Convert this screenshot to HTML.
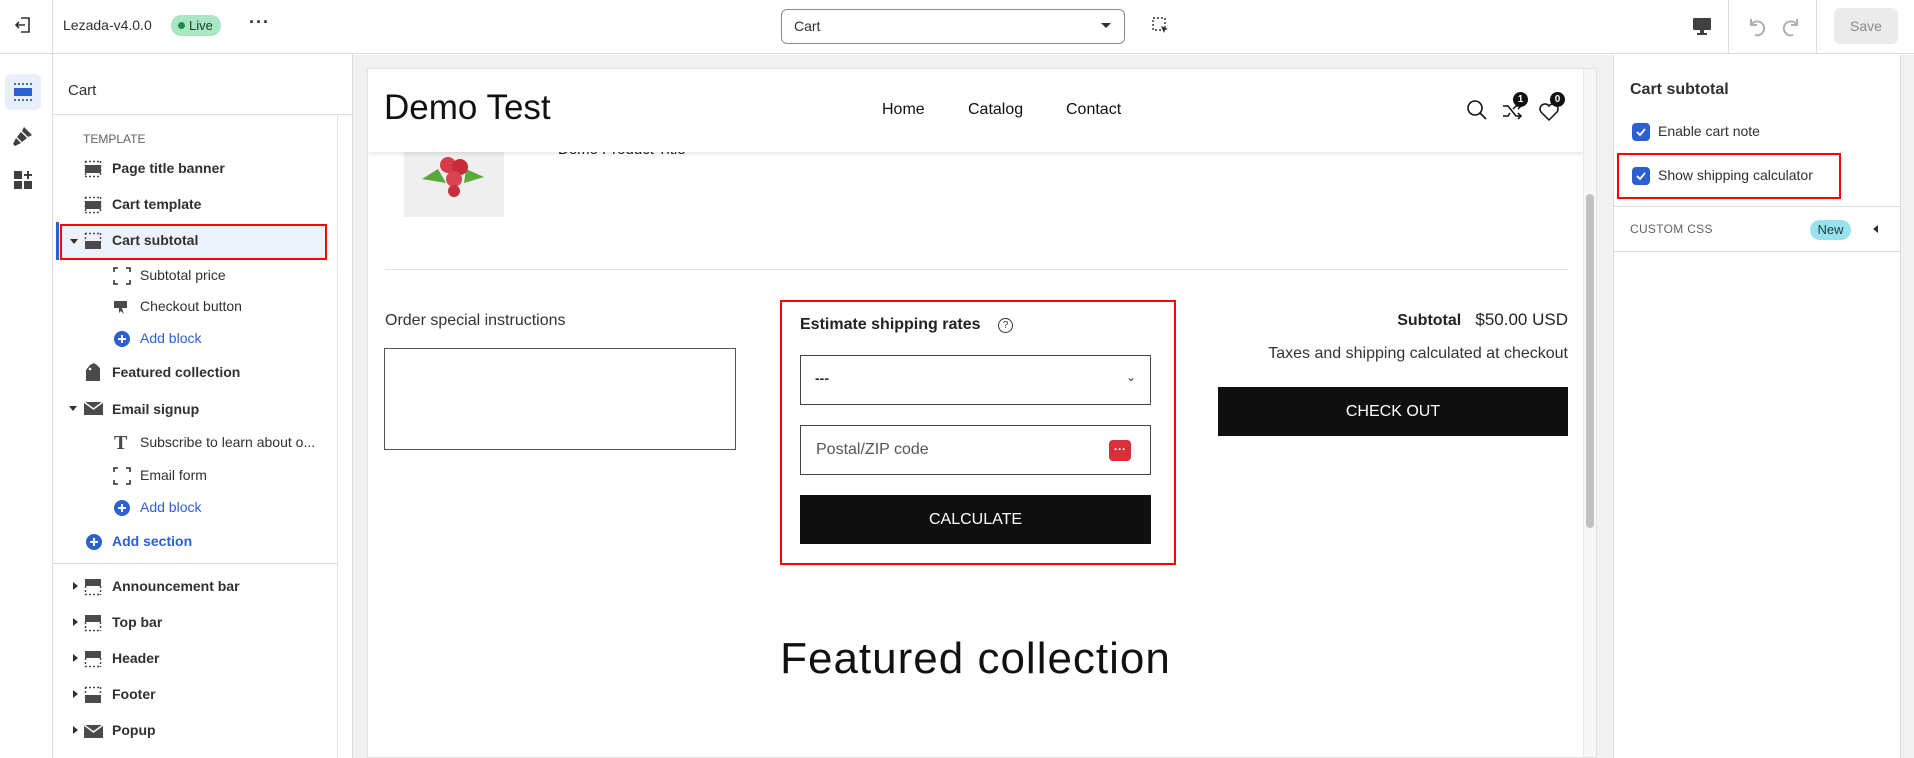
<!DOCTYPE html>
<html><head><meta charset="utf-8">
<style>
*{box-sizing:border-box;margin:0;padding:0}
body{width:1914px;height:758px;overflow:hidden;background:#fff;font-family:"Liberation Sans",sans-serif;color:#303030;position:relative}
.a{position:absolute}
.si{position:absolute;font-size:14px;font-weight:bold;color:#303030;white-space:nowrap}
.bi{position:absolute;font-size:14px;color:#303030;white-space:nowrap}
.blue{color:#2c5fd0}
.ic{position:absolute}
</style></head><body>
<div class="a" style="left:0;top:0;width:1914px;height:54px;border-bottom:1px solid #dcdcdc;background:#fff"></div>
<div class="a" style="left:52px;top:0;width:1px;height:54px;background:#dcdcdc"></div>
<svg class="ic" style="left:14px;top:16px" width="18" height="18" viewBox="0 0 18 18"><path d="M7 2H15V16H7M2 9H11M5 6L2 9L5 12" fill="none" stroke="#303030" stroke-width="1.6"/></svg>
<div class="a" style="left:63px;top:17px;font-size:14px;color:#303030">Lezada-v4.0.0</div>
<div class="a" style="left:171px;top:15px;width:50px;height:21px;border-radius:10px;background:#a8e6c4;font-size:13px;line-height:21px;padding-left:18px;color:#1a3a2a">Live</div>
<div class="a" style="left:178px;top:22px;width:7px;height:7px;border-radius:50%;background:#1f8a4f"></div>
<div class="a" style="left:249px;top:17px;font-size:18px;font-weight:bold;letter-spacing:1px;line-height:10px">···</div>
<div class="a" style="left:781px;top:9px;width:344px;height:35px;border:1px solid #8a8a8a;border-radius:6px;font-size:14px;line-height:33px;padding-left:12px">Cart</div>
<div class="a" style="left:1101px;top:23px;border-left:5px solid transparent;border-right:5px solid transparent;border-top:5px solid #303030"></div>
<svg class="ic" style="left:1151px;top:16px" width="20" height="20" viewBox="0 0 20 20"><rect x="2" y="2" width="12" height="12" fill="none" stroke="#303030" stroke-dasharray="2 2" stroke-width="1.4"/><path d="M10 10L17 13L14 14L13 17Z" fill="#303030"/></svg>
<svg class="ic" style="left:1692px;top:16px" width="20" height="20" viewBox="0 0 20 20"><rect x="1" y="2" width="18" height="12" rx="1" fill="#404040"/><rect x="8" y="14" width="4" height="3" fill="#404040"/><rect x="5" y="17" width="10" height="2" fill="#404040"/></svg>
<div class="a" style="left:1728px;top:0;width:1px;height:54px;background:#dcdcdc"></div>
<svg class="ic" style="left:1744px;top:14px" width="24" height="24" viewBox="0 0 24 24"><path d="M7 5V11H13M7 11A7 7 0 1 1 11 21" fill="none" stroke="#b0b0b0" stroke-width="2"/></svg>
<svg class="ic" style="left:1780px;top:14px" width="24" height="24" viewBox="0 0 24 24"><path d="M17 5V11H11M17 11A7 7 0 1 0 13 21" fill="none" stroke="#b0b0b0" stroke-width="2"/></svg>
<div class="a" style="left:1816px;top:0;width:1px;height:54px;background:#dcdcdc"></div>
<div class="a" style="left:1834px;top:8px;width:64px;height:36px;border-radius:6px;background:#ebebeb;color:#8a8a8a;font-size:14px;line-height:36px;text-align:center">Save</div>

<div class="a" style="left:52px;top:54px;width:1px;height:704px;background:#dcdcdc"></div>
<div class="a" style="left:5px;top:74px;width:36px;height:36px;border-radius:6px;background:#e9eefb"></div>
<svg class="ic" style="left:13px;top:82px" width="20" height="20" viewBox="0 0 20 20"><rect x="1" y="6" width="18" height="8" fill="#2c5fd0"/><path d="M1 2H19M1 18H19" stroke="#2c5fd0" stroke-width="1.8" stroke-dasharray="2 2"/></svg>
<svg class="ic" style="left:12px;top:125px" width="22" height="22" viewBox="0 0 22 22"><path d="M12 2L20 10L16 12L10 6Z M9 7L15 13L10 17L5 12Z M4 13L9 18L3 21L1 19Z" fill="#404040"/></svg>
<svg class="ic" style="left:13px;top:170px" width="20" height="20" viewBox="0 0 20 20"><rect x="1" y="1" width="8" height="8" fill="#404040"/><rect x="1" y="11" width="8" height="8" fill="#404040"/><rect x="11" y="11" width="8" height="8" fill="#404040"/><path d="M15 1V9M11 5H19" stroke="#404040" stroke-width="2"/></svg>

<div class="a" style="left:68px;top:82px;font-size:15px;color:#303030">Cart</div>
<div class="a" style="left:53px;top:114px;width:299px;height:1px;background:#dcdcdc"></div>
<div class="a" style="left:337px;top:115px;width:1px;height:643px;background:#e3e3e3"></div>
<div class="a" style="left:352px;top:54px;width:1px;height:704px;background:#dcdcdc"></div>
<div class="a" style="left:83px;top:132px;font-size:12px;color:#616161">TEMPLATE</div>

<svg width="0" height="0" style="position:absolute">
<defs>
<g id="sb"><rect x="1" y="5" width="16" height="8" fill="#4a4a4a"/><path d="M1 1.5H17M1 16.5H17M1.5 1V17M16.5 1V17" stroke="#4a4a4a" stroke-width="1.5" stroke-dasharray="2 2"/></g>
<g id="sbot"><rect x="1" y="9" width="16" height="8" fill="#4a4a4a"/><path d="M1 1.5H17M1.5 1V9M16.5 1V9" stroke="#4a4a4a" stroke-width="1.5" stroke-dasharray="2 2"/></g>
<g id="stop"><rect x="1" y="1" width="16" height="7" fill="#4a4a4a"/><path d="M1 16.5H17M1.5 8V17M16.5 8V17" stroke="#4a4a4a" stroke-width="1.5" stroke-dasharray="2 2"/></g>
<g id="env"><rect x="0" y="3" width="19" height="13" fill="#4a4a4a"/><path d="M0 3L9.5 10L19 3" fill="none" stroke="#fff" stroke-width="1.5"/></g>
<g id="brk"><path d="M1 5V1H5M13 1H17V5M17 13V17H13M5 17H1V13" fill="none" stroke="#4a4a4a" stroke-width="1.8"/></g>
<g id="plus"><circle cx="8" cy="8" r="8" fill="#2c5fd0"/><path d="M8 4V12M4 8H12" stroke="#fff" stroke-width="2"/></g>
</defs></svg>

<svg class="ic" style="left:84px;top:160px" width="18" height="18"><use href="#sb"/></svg>
<div class="si" style="left:112px;top:160px">Page title banner</div>
<svg class="ic" style="left:84px;top:196px" width="18" height="18"><use href="#sb"/></svg>
<div class="si" style="left:112px;top:196px">Cart template</div>

<div class="a" style="left:57px;top:224px;width:269px;height:36px;background:#edf1fc"></div>
<div class="a" style="left:56px;top:222px;width:3px;height:38px;background:#2c5fd0"></div>
<div class="a" style="left:60px;top:224px;width:267px;height:36px;border:2px solid #f00"></div>
<div class="a" style="left:70px;top:239px;border-left:4px solid transparent;border-right:4px solid transparent;border-top:5px solid #303030"></div>
<svg class="ic" style="left:84px;top:232px" width="18" height="18"><use href="#sbot"/></svg>
<div class="si" style="left:112px;top:232px">Cart subtotal</div>

<svg class="ic" style="left:113px;top:267px" width="18" height="18"><use href="#brk"/></svg>
<div class="bi" style="left:140px;top:267px">Subtotal price</div>
<svg class="ic" style="left:113px;top:298px" width="18" height="18" viewBox="0 0 18 18"><path d="M1 3H14V10H9L11 16L8 13L6 15V10H1Z" fill="#4a4a4a"/></svg>
<div class="bi" style="left:140px;top:298px">Checkout button</div>
<svg class="ic" style="left:114px;top:331px" width="16" height="16"><use href="#plus"/></svg>
<div class="bi blue" style="left:140px;top:330px">Add block</div>

<svg class="ic" style="left:84px;top:362px" width="20" height="20" viewBox="0 0 20 20"><path d="M6 3L10 1L14 4V19H2V8Z" fill="#4a4a4a"/><path d="M11 2L16 6V19H12" fill="#4a4a4a"/><circle cx="6" cy="7" r="1.3" fill="#fff"/></svg>
<div class="si" style="left:112px;top:364px">Featured collection</div>

<div class="a" style="left:69px;top:406px;border-left:4px solid transparent;border-right:4px solid transparent;border-top:5px solid #303030"></div>
<svg class="ic" style="left:84px;top:399px" width="20" height="18"><use href="#env"/></svg>
<div class="si" style="left:112px;top:401px">Email signup</div>
<div class="a" style="left:114px;top:432px;font-family:'Liberation Serif',serif;font-weight:bold;font-size:20px;color:#4a4a4a">T</div>
<div class="bi" style="left:140px;top:434px">Subscribe to learn about o...</div>
<svg class="ic" style="left:113px;top:467px" width="18" height="18"><use href="#brk"/></svg>
<div class="bi" style="left:140px;top:467px">Email form</div>
<svg class="ic" style="left:114px;top:500px" width="16" height="16"><use href="#plus"/></svg>
<div class="bi blue" style="left:140px;top:499px">Add block</div>
<svg class="ic" style="left:86px;top:534px" width="16" height="16"><use href="#plus"/></svg>
<div class="si blue" style="left:112px;top:533px">Add section</div>
<div class="a" style="left:53px;top:563px;width:284px;height:1px;background:#dcdcdc"></div>

<div class="a" style="left:73px;top:582px;border-top:4px solid transparent;border-bottom:4px solid transparent;border-left:5px solid #303030"></div>
<svg class="ic" style="left:84px;top:578px" width="18" height="18"><use href="#stop"/></svg>
<div class="si" style="left:112px;top:578px">Announcement bar</div>
<div class="a" style="left:73px;top:618px;border-top:4px solid transparent;border-bottom:4px solid transparent;border-left:5px solid #303030"></div>
<svg class="ic" style="left:84px;top:614px" width="18" height="18"><use href="#stop"/></svg>
<div class="si" style="left:112px;top:614px">Top bar</div>
<div class="a" style="left:73px;top:654px;border-top:4px solid transparent;border-bottom:4px solid transparent;border-left:5px solid #303030"></div>
<svg class="ic" style="left:84px;top:650px" width="18" height="18"><use href="#stop"/></svg>
<div class="si" style="left:112px;top:650px">Header</div>
<div class="a" style="left:73px;top:690px;border-top:4px solid transparent;border-bottom:4px solid transparent;border-left:5px solid #303030"></div>
<svg class="ic" style="left:84px;top:686px" width="18" height="18"><use href="#sbot"/></svg>
<div class="si" style="left:112px;top:686px">Footer</div>
<div class="a" style="left:73px;top:726px;border-top:4px solid transparent;border-bottom:4px solid transparent;border-left:5px solid #303030"></div>
<svg class="ic" style="left:84px;top:722px" width="20" height="18"><use href="#env"/></svg>
<div class="si" style="left:112px;top:722px">Popup</div>

<div class="a" style="left:353px;top:55px;width:1261px;height:703px;background:#f1f1f1"></div>
<div class="a" style="left:367px;top:68px;width:1230px;height:690px;background:#fff;border:1px solid #e3e3e3;overflow:hidden">
  <div class="a" style="left:36px;top:80px;width:100px;height:68px;background:#efefef"></div>
  <svg class="a" style="left:50px;top:74px" width="70" height="56" viewBox="0 0 70 56"><path d="M4 36L20 26L28 40Z M48 26L66 34L46 40Z" fill="#5aa93a"/><circle cx="30" cy="22" r="8" fill="#d83a4a"/><circle cx="42" cy="24" r="8" fill="#c92a3c"/><circle cx="36" cy="36" r="8" fill="#d94452"/><circle cx="36" cy="48" r="6" fill="#c7303e"/></svg>
  <div class="a" style="left:190px;top:72px;font-size:15px;color:#222">Demo Product Title</div>
  <div class="a" style="left:783px;top:82px;width:120px;height:1px;background:#ddd"></div>
  <div class="a" style="left:0;top:0;width:1215px;height:83px;background:#fff;box-shadow:0 2px 4px rgba(0,0,0,.1)"></div>
  <div class="a" style="left:16px;top:19px;font-size:35px;color:#111">Demo Test</div>
  <div class="a" style="left:514px;top:32px;font-size:16px;color:#111">Home</div>
  <div class="a" style="left:600px;top:32px;font-size:16px;color:#111">Catalog</div>
  <div class="a" style="left:698px;top:32px;font-size:16px;color:#111">Contact</div>
  <svg class="a" style="left:1098px;top:30px" width="22" height="22" viewBox="0 0 22 22"><circle cx="9" cy="9" r="7" fill="none" stroke="#111" stroke-width="1.6"/><path d="M14 14L20 20" stroke="#111" stroke-width="1.6"/></svg>
  <svg class="a" style="left:1134px;top:32px" width="22" height="20" viewBox="0 0 22 20"><path d="M1 5H6L14 15H19M1 15H6L8 12M11 8L14 5H19M16 2L19 5L16 8M16 12L19 15L16 18" fill="none" stroke="#111" stroke-width="1.5"/></svg>
  <div class="a" style="left:1145px;top:23px;width:15px;height:15px;border-radius:50%;background:#111;color:#fff;font-size:10px;font-weight:bold;text-align:center;line-height:15px">1</div>
  <svg class="a" style="left:1170px;top:33px" width="22" height="20" viewBox="0 0 22 20"><path d="M11 18L3 10A4.5 4.5 0 0 1 11 4A4.5 4.5 0 0 1 19 10Z" fill="none" stroke="#111" stroke-width="1.5"/></svg>
  <div class="a" style="left:1182px;top:23px;width:15px;height:15px;border-radius:50%;background:#111;color:#fff;font-size:10px;font-weight:bold;text-align:center;line-height:15px">0</div>

  <div class="a" style="left:17px;top:200px;width:1183px;height:1px;background:#e3e3e3"></div>
  <div class="a" style="left:17px;top:243px;font-size:16px;color:#333">Order special instructions</div>
  <div class="a" style="left:16px;top:279px;width:352px;height:102px;border:1px solid #555"></div>

  <div class="a" style="left:412px;top:231px;width:396px;height:265px;border:2.5px solid #f00"></div>
  <div class="a" style="left:432px;top:247px;font-size:16px;font-weight:bold;color:#222">Estimate shipping rates</div>
  <div class="a" style="left:630px;top:249px;width:15px;height:15px;border:1.3px solid #333;border-radius:50%;font-size:10px;text-align:center;line-height:13px;color:#333">?</div>
  <div class="a" style="left:432px;top:286px;width:351px;height:50px;border:1px solid #444;font-size:14px;font-weight:bold;padding:14px 0 0 14px">---</div>
  <div class="a" style="left:758px;top:301px;font-size:12px;color:#333">⌄</div>
  <div class="a" style="left:432px;top:356px;width:351px;height:50px;border:1px solid #444;font-size:16px;color:#555;padding:15px 0 0 15px">Postal/ZIP code</div>
  <div class="a" style="left:741px;top:371px;width:22px;height:21px;border-radius:4px;background:#d6303a;color:#fff;font-size:12px;font-weight:bold;text-align:center;line-height:18px">···</div>
  <div class="a" style="left:432px;top:426px;width:351px;height:49px;background:#0f0f0f;color:#fff;font-size:16px;text-align:center;line-height:49px">CALCULATE</div>

  <div class="a" style="left:840px;top:241px;width:360px;text-align:right;font-size:17px;color:#222"><span style="font-weight:bold;font-size:16px">Subtotal</span>&nbsp;&nbsp;&nbsp;$50.00 USD</div>
  <div class="a" style="left:840px;top:276px;width:360px;text-align:right;font-size:16px;color:#333">Taxes and shipping calculated at checkout</div>
  <div class="a" style="left:850px;top:318px;width:350px;height:49px;background:#0f0f0f;color:#fff;font-size:16px;text-align:center;line-height:49px">CHECK OUT</div>

  <div class="a" style="left:0;top:565px;width:1215px;text-align:center;font-size:44px;letter-spacing:1px;color:#111">Featured collection</div>

  <div class="a" style="left:1215px;top:0;width:15px;height:690px;background:#f7f7f7;border-left:1px solid #e8e8e8"></div>
  <div class="a" style="left:1218px;top:125px;width:8px;height:334px;border-radius:4px;background:#c1c1c1"></div>
</div>

<div class="a" style="left:1613px;top:55px;width:1px;height:703px;background:#dcdcdc"></div>
<div class="a" style="left:1900px;top:55px;width:14px;height:703px;background:#f1f1f1;border-left:1px solid #dcdcdc"></div>
<div class="a" style="left:1630px;top:81px;font-size:16px;font-weight:bold;color:#303030">Cart subtotal</div>
<div class="a" style="left:1632px;top:123px;width:18px;height:18px;border-radius:4px;background:#2c5fd0"></div>
<svg class="ic" style="left:1634px;top:125px" width="14" height="14" viewBox="0 0 14 14"><path d="M3 7L6 10L11 4" fill="none" stroke="#fff" stroke-width="1.8"/></svg>
<div class="a" style="left:1658px;top:123px;font-size:14px;color:#303030">Enable cart note</div>
<div class="a" style="left:1617px;top:153px;width:224px;height:46px;border:2px solid #f00"></div>
<div class="a" style="left:1632px;top:167px;width:18px;height:18px;border-radius:4px;background:#2c5fd0"></div>
<svg class="ic" style="left:1634px;top:169px" width="14" height="14" viewBox="0 0 14 14"><path d="M3 7L6 10L11 4" fill="none" stroke="#fff" stroke-width="1.8"/></svg>
<div class="a" style="left:1658px;top:167px;font-size:14px;color:#303030">Show shipping calculator</div>
<div class="a" style="left:1614px;top:206px;width:286px;height:1px;background:#dcdcdc"></div>
<div class="a" style="left:1630px;top:222px;font-size:12px;color:#616161;letter-spacing:.3px">CUSTOM CSS</div>
<div class="a" style="left:1810px;top:220px;width:41px;height:20px;border-radius:10px;background:#98e2ee;font-size:13px;text-align:center;line-height:20px;color:#1f3a40">New</div>
<div class="a" style="left:1873px;top:225px;border-top:4px solid transparent;border-bottom:4px solid transparent;border-right:5px solid #303030"></div>
<div class="a" style="left:1614px;top:251px;width:286px;height:1px;background:#dcdcdc"></div>
</body></html>
